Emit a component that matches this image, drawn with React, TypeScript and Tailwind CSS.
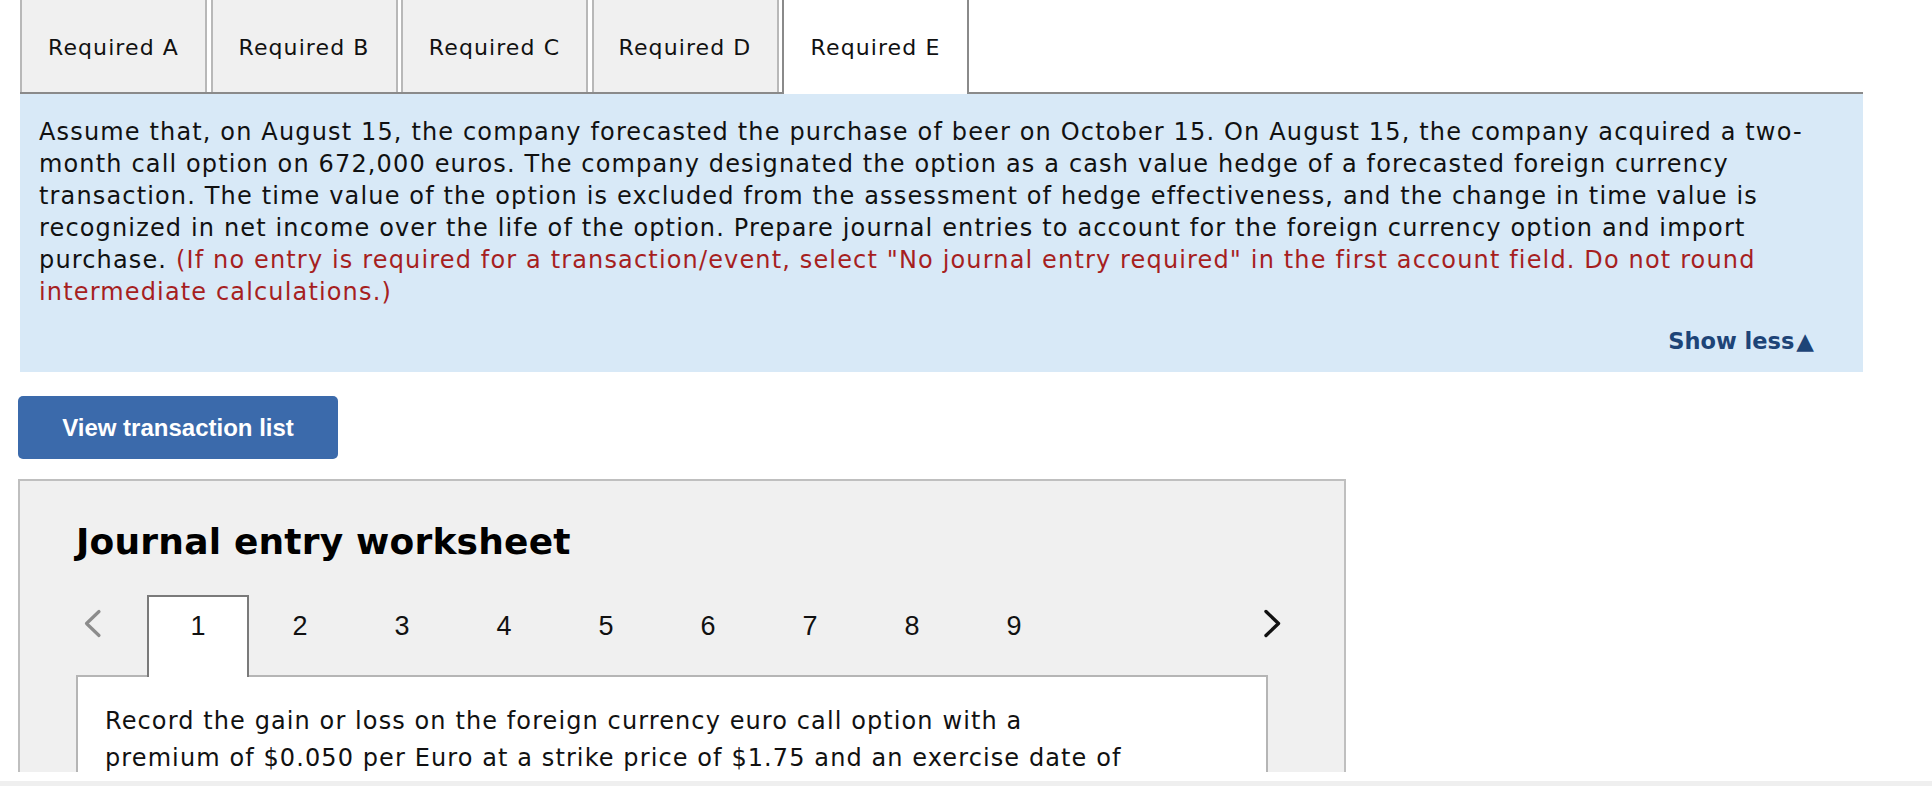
const tabs = ['Required A', 'Required B', 'Required C', 'Required D', 'Required E'];
const steps = [1, 2, 3, 4, 5, 6, 7, 8, 9];

function ChevronLeft() {
  return (
    <svg width="19" height="29" viewBox="0 0 19 29" fill="none">
      <polyline points="16,2.5 3.5,14.5 16,26.5" stroke="#8c8c8c" strokeWidth="3.2" strokeLinecap="round" strokeLinejoin="round" />
    </svg>
  );
}

function ChevronRight() {
  return (
    <svg width="19" height="29" viewBox="0 0 19 29" fill="none">
      <polyline points="3,2.5 15.5,14.5 3,26.5" stroke="#111" strokeWidth="3.4" strokeLinecap="round" strokeLinejoin="round" />
    </svg>
  );
}

export default function App() {
  return (
    <div className="w-[1932px] h-[786px] overflow-hidden bg-white text-[#111] font-['DejaVu_Sans',sans-serif]">
      <div className="h-[772px] overflow-hidden">
        <div className="ml-[20px] w-[1843px]">
          {/* part tabs */}
          <div className="flex h-[94px] items-end gap-[3.5px] border-b-2 border-[#8a8a8a]">
            {tabs.map((t, i) =>
              i === 4 ? (
                <div
                  key={t}
                  className="relative -mb-[2px] flex h-[94px] w-[187px] items-center justify-center border-x-2 border-[#8a8a8a] bg-white pt-[1px] text-[22px] tracking-[1.1px]"
                >
                  {t}
                </div>
              ) : (
                <div
                  key={t}
                  className="flex h-[92px] w-[187px] items-center justify-center border-x-2 border-[#b8b8b8] bg-[#f0f0f0] pt-[3px] text-[22px] tracking-[1.1px]"
                >
                  {t}
                </div>
              )
            )}
          </div>

          {/* question text */}
          <div className="bg-[#d8e9f7] px-[19px] pt-[22px] pb-[15px]">
            <p className="text-[24px] leading-[32px] tracking-[1.15px]">
              Assume that, on August 15, the company forecasted the purchase of beer on October 15. On August 15, the
              company acquired a two-month call option on 672,000 euros. The company designated the option as a cash
              value hedge of a forecasted foreign currency transaction. The time value of the option is excluded from
              the assessment of hedge effectiveness, and the change in time value is recognized in net income over the
              life of the option. Prepare journal entries to account for the foreign currency option and import
              purchase.{' '}
              <span className="text-[#a61f1f]">
                (If no entry is required for a transaction/event, select "No journal entry required" in the first
                account field. Do not round intermediate calculations.)
              </span>
            </p>
            <div className="mt-[17px] flex justify-end pr-[30px]">
              <span className="flex items-center gap-[2px] text-[22.5px] font-bold leading-[32px] text-[#1d4477]">
                Show less<span className="text-[23px]">▲</span>
              </span>
            </div>
          </div>
        </div>

        <button className="ml-[18px] mt-[24px] h-[63px] w-[320px] rounded-[5px] bg-[#3b6aab] text-[24px] font-bold text-white font-['Liberation_Sans',Arial,sans-serif]">
          View transaction list
        </button>

        {/* worksheet */}
        <div className="ml-[18px] mt-[20px] w-[1328px] border-2 border-[#bfbfbf] bg-[#f0f0f0] pl-[56px] pt-[39px]">
          <h2 className="text-[36px] font-bold leading-[44px] tracking-[0.2px] text-black">Journal entry worksheet</h2>

          <div className="mt-[31px] flex h-[80px] items-start">
            <div className="w-[71px] pl-[7px] pt-[14px]">
              <ChevronLeft />
            </div>
            {steps.map((s) => (
              <div
                key={s}
                className={
                  s === 1
                    ? 'relative z-10 h-[82px] w-[102px] border-2 border-b-0 border-[#7a7a7a] bg-white pt-[14px] text-center text-[27px] leading-[30px] font-["Liberation_Sans",Arial,sans-serif]'
                    : 'h-[82px] w-[102px] border-2 border-b-0 border-transparent pt-[14px] text-center text-[27px] leading-[30px] font-["Liberation_Sans",Arial,sans-serif]'
                }
              >
                {s}
              </div>
            ))}
            <div className="ml-[198px] pt-[14px]">
              <ChevronRight />
            </div>
          </div>

          <div className="h-[220px] w-[1192px] border-2 border-b-0 border-[#b5b5b5] bg-white pl-[27px] pt-[26px]">
            <p className="text-[24px] leading-[37px] tracking-[1.1px]">
              Record the gain or loss on the foreign currency euro call option with a
              <br />
              premium of $0.050 per Euro at a strike price of $1.75 and an exercise date of
            </p>
          </div>
        </div>
      </div>
      <div className="h-[9px] bg-white" />
      <div className="h-[5px] bg-[#efefef]" />
    </div>
  );
}
